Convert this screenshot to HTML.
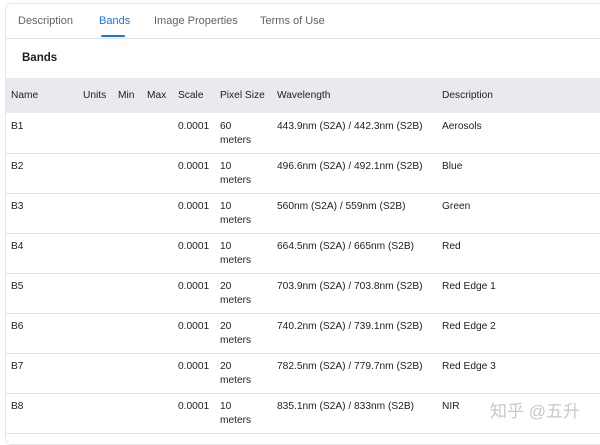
<!DOCTYPE html>
<html><head><style>
body{margin:0;width:600px;height:435px;overflow:hidden;background:#fff;font-family:"Liberation Sans",Arial,sans-serif;color:#202124;position:relative}
.card{position:absolute;left:5px;top:3px;width:620px;height:440px;border:1px solid #e6e6e6;border-radius:6px}
.t{position:absolute;font-size:11px;white-space:nowrap}
.tab{top:15px;color:#5f6368;font-size:11px}
.hline{position:absolute;left:6px;width:600px;height:1px;background:#e3e3e3}
.c{position:absolute;font-size:10.2px;line-height:14px;white-space:nowrap}
</style></head><body>
<div class="card"></div>
<div class="t tab" style="left:18px">Description</div>
<div class="t tab" style="left:99px;color:#1a73e8">Bands</div>
<div class="t tab" style="left:154px">Image Properties</div>
<div class="t tab" style="left:260px">Terms of Use</div>
<div style="position:absolute;left:101px;top:35px;width:24px;height:2px;background:#1a73e8;border-radius:1px"></div>
<div class="hline" style="top:38px"></div>
<div class="t" style="left:22px;top:52px;font-weight:bold;font-size:11.5px">Bands</div>
<div style="position:absolute;left:6px;top:78px;width:600px;height:35px;background:#e8eaed"></div>
<div class="c" style="top:89px;left:11px">Name</div>
<div class="c" style="top:89px;left:83px">Units</div>
<div class="c" style="top:89px;left:118px">Min</div>
<div class="c" style="top:89px;left:147px">Max</div>
<div class="c" style="top:89px;left:178px">Scale</div>
<div class="c" style="top:89px;left:220px">Pixel Size</div>
<div class="c" style="top:89px;left:277px">Wavelength</div>
<div class="c" style="top:89px;left:442px">Description</div>
<div id="rows"></div>
<script>
var d=[["B1","60","443.9nm (S2A) / 442.3nm (S2B)","Aerosols"],["B2","10","496.6nm (S2A) / 492.1nm (S2B)","Blue"],["B3","10","560nm (S2A) / 559nm (S2B)","Green"],["B4","10","664.5nm (S2A) / 665nm (S2B)","Red"],["B5","20","703.9nm (S2A) / 703.8nm (S2B)","Red Edge 1"],["B6","20","740.2nm (S2A) / 739.1nm (S2B)","Red Edge 2"],["B7","20","782.5nm (S2A) / 779.7nm (S2B)","Red Edge 3"],["B8","10","835.1nm (S2A) / 833nm (S2B)","NIR"]];
var h="";d.forEach(function(r,i){var y=113+i*40,ty=y+7;
h+='<div class="c" style="top:'+ty+'px;left:11px">'+r[0]+'</div><div class="c" style="top:'+ty+'px;left:178px">0.0001</div><div class="c" style="top:'+ty+'px;left:220px">'+r[1]+'<br>meters</div><div class="c" style="top:'+ty+'px;left:277px">'+r[2]+'</div><div class="c" style="top:'+ty+'px;left:442px">'+r[3]+'</div><div class="hline" style="top:'+(y+40)+'px"></div>';});
document.getElementById("rows").innerHTML=h;
</script>
<div class="t" style="left:490px;top:397px;font-size:17px;color:#c8c8c8;font-family:'Liberation Sans','Noto Sans CJK SC',sans-serif">知乎 @五升</div>
</body></html>
